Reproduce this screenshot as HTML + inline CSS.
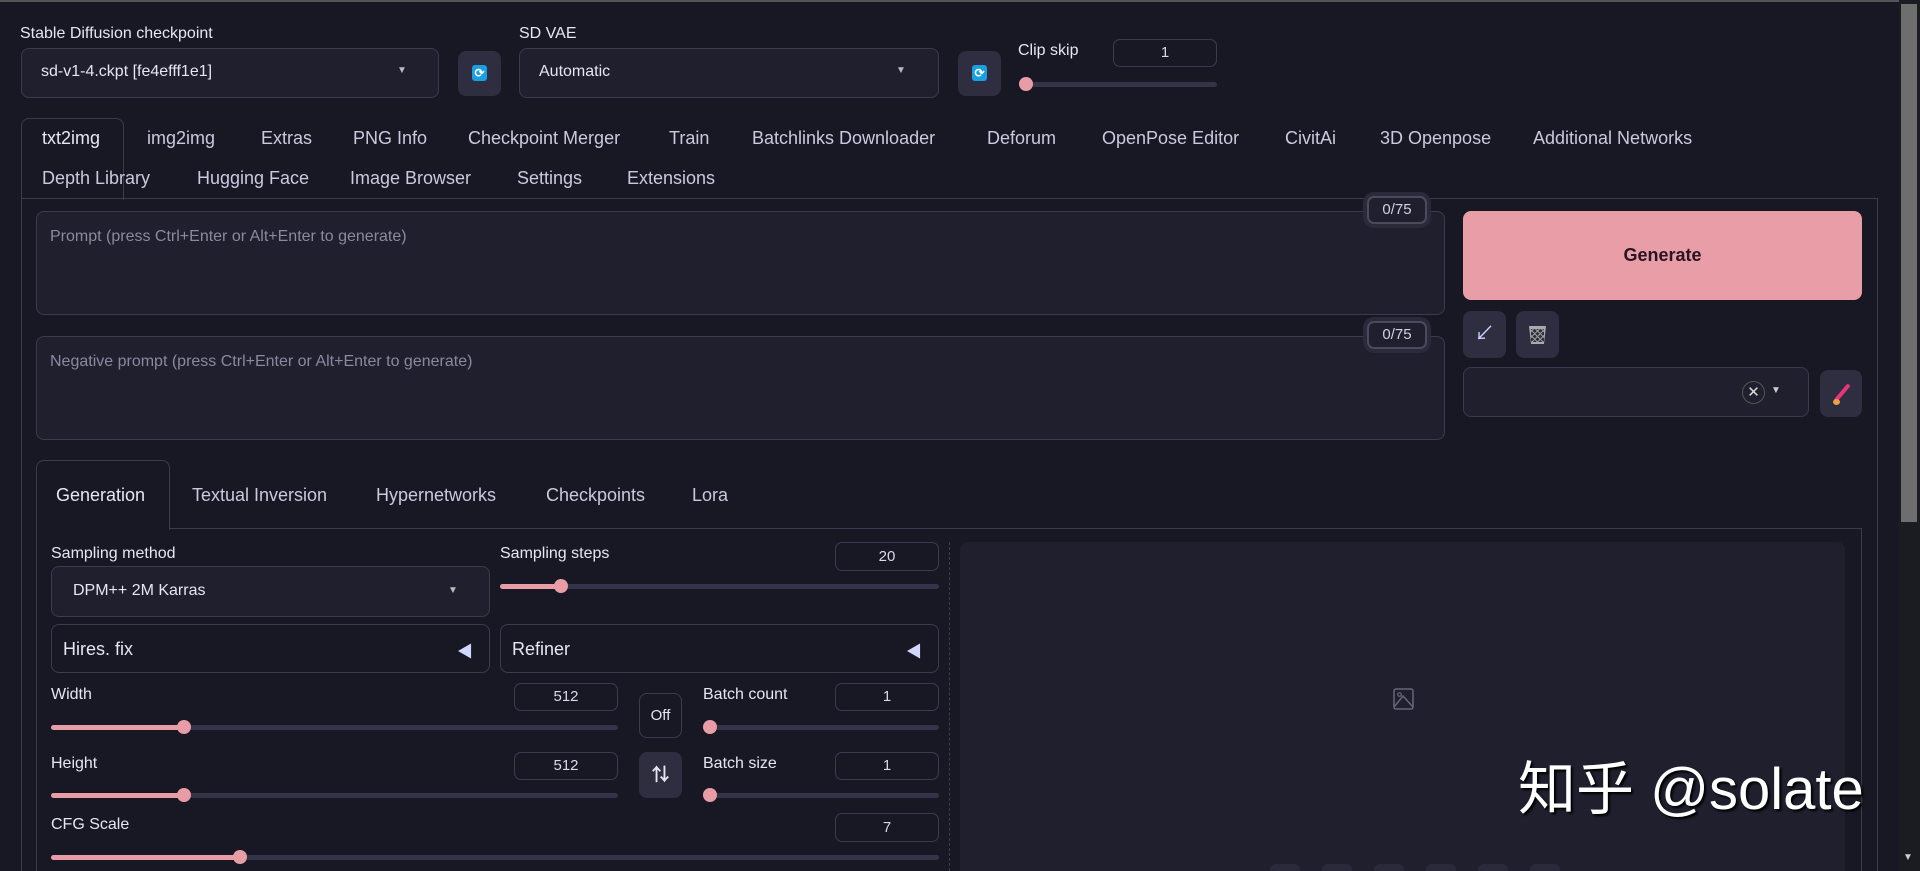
<!DOCTYPE html>
<html style="overflow:hidden;height:871px"><head><meta charset="utf-8"><style>
*{box-sizing:border-box;margin:0;padding:0}
body{width:1920px;height:871px;background:#181825;overflow:hidden;position:relative;font-family:"Liberation Sans","Noto Sans CJK SC",sans-serif;color:#e6e6f0}
.a{position:absolute}
.lbl{position:absolute;font-size:16px;color:#e6e6f0;white-space:nowrap}
.box{position:absolute;background:#1f1f2e;border:1px solid #3b3b4f;border-radius:8px}
.btn{position:absolute;background:#2e2e40;border-radius:8px}
.tab{position:absolute;font-size:18px;color:#c9c9e0;white-space:nowrap}
.num{position:absolute;background:#181825;border:1px solid #3b3b4f;border-radius:7px;font-size:15px;text-align:center;color:#d8d8e8}
.tr{position:absolute;height:5px;background:#33334a;border-radius:3px}
.fill{position:absolute;height:5px;background:#e89da6;border-radius:3px}
.th{position:absolute;width:14px;height:14px;border-radius:50%;background:#e89da6}
.cnt{position:absolute;width:60px;height:28px;border:2px solid #4a4a5e;border-radius:7px;background:#1f1f2e;font-size:15px;text-align:center;line-height:24px;color:#d0d0e0;box-shadow:0 0 0 4px #2a2a3a}
.ref{position:absolute;width:15px;height:16px;background:#1a9fe0;border-radius:3px;color:#fff;font-size:12px;line-height:16px;text-align:center;font-weight:bold}
</style></head><body>
<div class="a" style="left:0;top:0;width:1920px;height:2px;background:#555"></div>

<div class="lbl" style="left:20px;top:25px">Stable Diffusion checkpoint</div>
<div class="box" style="left:21px;top:48px;width:418px;height:50px"><span class="a" style="left:19px;top:14px;font-size:16px">sd-v1-4.ckpt [fe4efff1e1]</span><span class="a" style="left:375px;top:16px;font-size:10px;color:#bbb">▼</span></div>
<div class="btn" style="left:458px;top:51px;width:43px;height:45px"><div class="ref" style="left:14px;top:14px">⟳</div></div>
<div class="lbl" style="left:519px;top:25px">SD VAE</div>
<div class="box" style="left:519px;top:48px;width:420px;height:50px"><span class="a" style="left:19px;top:14px;font-size:16px">Automatic</span><span class="a" style="left:376px;top:16px;font-size:10px;color:#bbb">▼</span></div>
<div class="btn" style="left:958px;top:51px;width:43px;height:45px"><div class="ref" style="left:14px;top:14px">⟳</div></div>
<div class="lbl" style="left:1018px;top:42px">Clip skip</div>
<div class="num" style="left:1113px;top:39px;width:104px;height:28px;line-height:26px">1</div>
<div class="tr" style="left:1025px;top:82px;width:192px"></div>
<div class="th" style="left:1019px;top:77px"></div>

<div class="a" style="left:21px;top:118px;width:103px;height:82px;border:1px solid #3b3b4f;border-bottom:none;border-radius:8px 8px 0 0;background:#181825"></div>
<div class="tab" style="left:42px;top:128px;color:#e6e6f0">txt2img</div>
<div class="tab" style="left:147px;top:128px">img2img</div>
<div class="tab" style="left:261px;top:128px">Extras</div>
<div class="tab" style="left:353px;top:128px">PNG Info</div>
<div class="tab" style="left:468px;top:128px">Checkpoint Merger</div>
<div class="tab" style="left:669px;top:128px">Train</div>
<div class="tab" style="left:752px;top:128px">Batchlinks Downloader</div>
<div class="tab" style="left:987px;top:128px">Deforum</div>
<div class="tab" style="left:1102px;top:128px">OpenPose Editor</div>
<div class="tab" style="left:1285px;top:128px">CivitAi</div>
<div class="tab" style="left:1380px;top:128px">3D Openpose</div>
<div class="tab" style="left:1533px;top:128px">Additional Networks</div>
<div class="tab" style="left:42px;top:168px">Depth Library</div>
<div class="tab" style="left:197px;top:168px">Hugging Face</div>
<div class="tab" style="left:350px;top:168px">Image Browser</div>
<div class="tab" style="left:517px;top:168px">Settings</div>
<div class="tab" style="left:627px;top:168px">Extensions</div>

<div class="a" style="left:21px;top:198px;width:1857px;height:673px;border:1px solid #3b3b4f;border-bottom:none"></div>

<div class="box" style="left:36px;top:211px;width:1409px;height:104px"><span class="a" style="left:13px;top:16px;font-size:16px;color:#8a8a9e">Prompt (press Ctrl+Enter or Alt+Enter to generate)</span></div>
<div class="cnt" style="left:1367px;top:196px">0/75</div>
<div class="box" style="left:36px;top:336px;width:1409px;height:104px"><span class="a" style="left:13px;top:16px;font-size:16px;color:#8a8a9e">Negative prompt (press Ctrl+Enter or Alt+Enter to generate)</span></div>
<div class="cnt" style="left:1367px;top:321px">0/75</div>

<div class="a" style="left:1463px;top:211px;width:399px;height:89px;background:#e99da7;border-radius:8px;font-size:18px;font-weight:bold;color:#2a1420;text-align:center;line-height:89px">Generate</div>
<div class="btn" style="left:1463px;top:311px;width:43px;height:47px;color:#c8d0ff;font-size:20px;text-align:center;line-height:47px">↙</div>
<div class="btn" style="left:1516px;top:311px;width:43px;height:47px"><div class="a" style="left:13px;top:15px;width:17px;height:18px;border:2px solid #aaa;border-top-width:3px;clip-path:polygon(0 0,100% 0,88% 100%,12% 100%);background:repeating-linear-gradient(45deg,#999 0 1px,transparent 1px 4px),repeating-linear-gradient(-45deg,#999 0 1px,transparent 1px 4px)"></div></div>
<div class="box" style="left:1463px;top:367px;width:346px;height:50px"><div class="a" style="left:278px;top:13px;width:23px;height:23px;border:1px solid #555;border-radius:50%;text-align:center;line-height:21px;font-size:15px;color:#ddd">✕</div><span class="a" style="left:307px;top:17px;font-size:10px;color:#ccc">▼</span></div>
<div class="btn" style="left:1820px;top:370px;width:42px;height:47px"><div class="a" style="left:20px;top:12px;width:4px;height:22px;background:#e8357a;transform:rotate(40deg);border-radius:2px"></div><div class="a" style="left:13px;top:29px;width:7px;height:6px;background:#f0a040;border-radius:50%"></div></div>

<div class="a" style="left:36px;top:460px;width:134px;height:70px;border:1px solid #3b3b4f;border-bottom:none;border-radius:8px 8px 0 0;background:#181825"></div>
<div class="a" style="left:170px;top:528px;width:1692px;height:1px;background:#3b3b4f"></div>
<div class="a" style="left:36px;top:528px;width:1px;height:343px;background:#3b3b4f"></div>
<div class="a" style="left:1861px;top:528px;width:1px;height:343px;background:#3b3b4f"></div>
<div class="tab" style="left:56px;top:485px;color:#e6e6f0">Generation</div>
<div class="tab" style="left:192px;top:485px">Textual Inversion</div>
<div class="tab" style="left:376px;top:485px">Hypernetworks</div>
<div class="tab" style="left:546px;top:485px">Checkpoints</div>
<div class="tab" style="left:692px;top:485px">Lora</div>

<div class="lbl" style="left:51px;top:545px">Sampling method</div>
<div class="box" style="left:51px;top:566px;width:439px;height:51px"><span class="a" style="left:21px;top:15px;font-size:16px">DPM++ 2M Karras</span><span class="a" style="left:396px;top:18px;font-size:10px;color:#bbb">▼</span></div>
<div class="lbl" style="left:500px;top:545px">Sampling steps</div>
<div class="num" style="left:835px;top:542px;width:104px;height:29px;line-height:27px">20</div>
<div class="tr" style="left:500px;top:584px;width:439px"></div><div class="fill" style="left:500px;top:584px;width:61px"></div><div class="th" style="left:554px;top:579px"></div>

<div class="box" style="left:51px;top:624px;width:439px;height:49px;background:#181825"><span class="a" style="left:11px;top:14px;font-size:18px">Hires. fix</span><span class="a" style="left:405px;top:13px;font-size:16px;color:#d0d8ff">◀</span></div>
<div class="box" style="left:500px;top:624px;width:439px;height:49px;background:#181825"><span class="a" style="left:11px;top:14px;font-size:18px">Refiner</span><span class="a" style="left:405px;top:13px;font-size:16px;color:#d0d8ff">◀</span></div>

<div class="lbl" style="left:51px;top:686px">Width</div>
<div class="num" style="left:514px;top:683px;width:104px;height:28px;line-height:26px">512</div>
<div class="tr" style="left:51px;top:725px;width:567px"></div><div class="fill" style="left:51px;top:725px;width:133px"></div><div class="th" style="left:177px;top:720px"></div>
<div class="a" style="left:639px;top:693px;width:43px;height:45px;border:1px solid #3b3b4f;border-radius:8px;font-size:15px;text-align:center;line-height:43px">Off</div>
<div class="lbl" style="left:703px;top:686px">Batch count</div>
<div class="num" style="left:835px;top:683px;width:104px;height:28px;line-height:26px">1</div>
<div class="tr" style="left:703px;top:725px;width:236px"></div><div class="th" style="left:703px;top:720px"></div>

<div class="lbl" style="left:51px;top:755px">Height</div>
<div class="num" style="left:514px;top:752px;width:104px;height:28px;line-height:26px">512</div>
<div class="tr" style="left:51px;top:793px;width:567px"></div><div class="fill" style="left:51px;top:793px;width:133px"></div><div class="th" style="left:177px;top:788px"></div>
<div class="btn" style="left:639px;top:752px;width:43px;height:46px;font-size:18px;text-align:center;line-height:46px;font-weight:bold">⇅</div>
<div class="lbl" style="left:703px;top:755px">Batch size</div>
<div class="num" style="left:835px;top:752px;width:104px;height:28px;line-height:26px">1</div>
<div class="tr" style="left:703px;top:793px;width:236px"></div><div class="th" style="left:703px;top:788px"></div>

<div class="lbl" style="left:51px;top:816px">CFG Scale</div>
<div class="num" style="left:835px;top:813px;width:104px;height:29px;line-height:27px">7</div>
<div class="tr" style="left:51px;top:855px;width:888px"></div><div class="fill" style="left:51px;top:855px;width:189px"></div><div class="th" style="left:233px;top:850px"></div>

<div class="a" style="left:949px;top:542px;width:1px;height:329px;border-left:1px dashed #3b3b4f"></div>
<div class="a" style="left:960px;top:542px;width:885px;height:329px;background:#1f1f2e;border-radius:8px 8px 0 0"></div>
<svg class="a" style="left:1393px;top:688px" width="21" height="22" viewBox="0 0 21 22"><rect x="1" y="1" width="19" height="20" rx="2" fill="none" stroke="#666678" stroke-width="1.5"/><circle cx="6.5" cy="6.5" r="1.8" fill="none" stroke="#666678" stroke-width="1.2"/><path d="M1 19 L10 8 L20 19" fill="none" stroke="#666678" stroke-width="1.5"/></svg>
<div class="a" style="left:1270px;top:864px;width:350px;height:7px;display:flex;gap:22px"><i style="width:30px;background:#2a2a3a;border-radius:6px 6px 0 0"></i><i style="width:30px;background:#2a2a3a;border-radius:6px 6px 0 0"></i><i style="width:30px;background:#2a2a3a;border-radius:6px 6px 0 0"></i><i style="width:30px;background:#2a2a3a;border-radius:6px 6px 0 0"></i><i style="width:30px;background:#2a2a3a;border-radius:6px 6px 0 0"></i><i style="width:30px;background:#2a2a3a;border-radius:6px 6px 0 0"></i></div>

<div class="a" style="left:1518px;top:754px;font-size:58px;color:#fff;white-space:nowrap;text-shadow:2px 2px 2px #000;line-height:72px">知乎 @solate</div>

<div class="a" style="left:1899px;top:0;width:21px;height:871px;background:#1b1b22"></div>
<div class="a" style="left:1901px;top:4px;width:16px;height:518px;background:#6e6e6e"></div>
<div class="a" style="left:1903px;top:852px;font-size:10px;color:#ccc">▼</div>
</body></html>
